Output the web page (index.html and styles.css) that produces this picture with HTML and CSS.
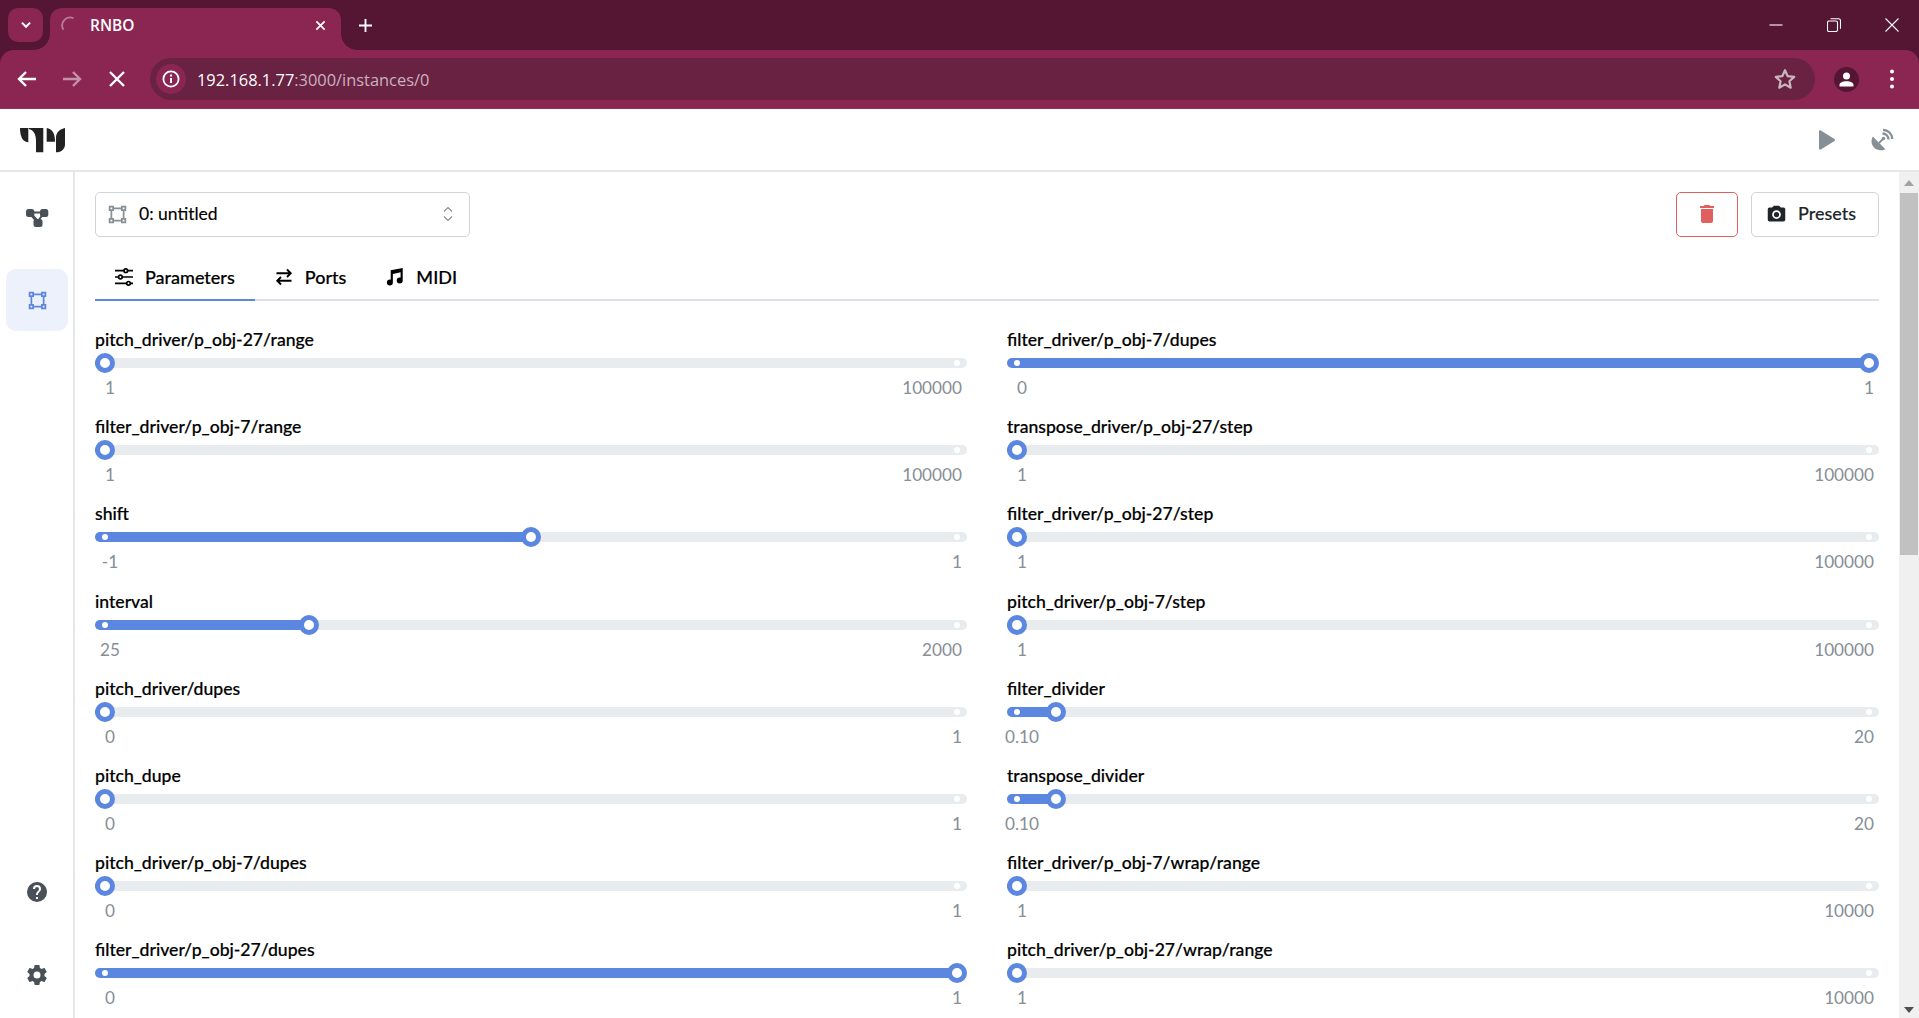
FILE: index.html
```html
<!DOCTYPE html>
<html lang="en">
<head>
<meta charset="utf-8">
<title>RNBO</title>
<link rel="stylesheet" href="styles.css">
</head>
<body>
<div class="chrome">
  <div class="tabstrip">
    <button class="tab-search"><svg viewBox="0 0 24 24" class="ic-14"><path d="M5 8l7 7 7-7" fill="none" stroke="#fff" stroke-width="3.4"/></svg></button>
    <div class="tab">
      <svg viewBox="0 0 20 20" class="spinner"><path d="M3 14A8 8 0 0 1 13 3" fill="none" stroke="#b77d97" stroke-width="1.8" stroke-linecap="round"/></svg>
      <span class="tab-title">RNBO</span>
      <svg viewBox="0 0 12 12" class="tab-close"><path d="M1.5 1.5l9 9M10.5 1.5l-9 9" stroke="#fff" stroke-width="1.9"/></svg>
    </div>
    <svg viewBox="0 0 14 14" class="new-tab"><path d="M7 0v14M0 7h14" stroke="#fff" stroke-width="2"/></svg>
    <div class="win-controls">
      <svg viewBox="0 0 14 14" class="win-ic win-min"><path d="M0.5 7h13" stroke="#fff" stroke-width="1.1"/></svg>
      <svg viewBox="0 0 14 14" class="win-ic win-restore"><rect x="0.5" y="3" width="10" height="10.5" rx="1.5" fill="none" stroke="#fff" stroke-width="1.1"/><path d="M3.5 0.8h8.2a1.8 1.8 0 0 1 1.8 1.8v8.2" fill="none" stroke="#fff" stroke-width="1.1"/></svg>
      <svg viewBox="0 0 14 14" class="win-ic"><path d="M0.5 0.5l13 13M13.5 0.5l-13 13" stroke="#fff" stroke-width="1.1"/></svg>
    </div>
  </div>
  <div class="toolbar">
    <svg viewBox="0 0 24 24" class="nav-ic"><path d="M21 12H4M11 5l-7 7 7 7" fill="none" stroke="#fff" stroke-width="2.4"/></svg>
    <svg viewBox="0 0 24 24" class="nav-ic"><path d="M3 12h17M13 5l7 7-7 7" fill="none" stroke="#c391a8" stroke-width="2.4"/></svg>
    <svg viewBox="0 0 24 24" class="nav-ic"><path d="M5 5l14 14M19 5L5 19" fill="none" stroke="#fff" stroke-width="2.4"/></svg>
    <div class="omnibox">
      <span class="info-chip"><svg viewBox="0 0 20 20" class="info-ic"><circle cx="10" cy="10" r="7.6" fill="none" stroke="#fff" stroke-width="1.8"/><path d="M10 9v5M10 5.5v2" stroke="#fff" stroke-width="2"/></svg></span>
      <span class="url"><span class="url-host">192.168.1.77</span>:3000/instances/0</span>
      <svg viewBox="0 0 24 24" class="star"><path d="M12 3.2l2.7 6 6.5.7-4.8 4.4 1.3 6.4-5.7-3.3-5.7 3.3 1.3-6.4-4.8-4.4 6.5-.7z" fill="none" stroke="#c9b6bf" stroke-width="2.2" stroke-linejoin="round"/></svg>
    </div>
    <span class="avatar"><svg viewBox="0 0 24 24" class="avatar-ic"><path fill="#fff" d="M12 4A4 4 0 0 1 16 8A4 4 0 0 1 12 12A4 4 0 0 1 8 8A4 4 0 0 1 12 4M12 14C16.42 14 20 15.79 20 18V20H4V18C4 15.79 7.58 14 12 14Z"/></svg></span>
    <svg viewBox="0 0 6 22" class="dots"><circle cx="3" cy="3.5" r="2" fill="#fff"/><circle cx="3" cy="11" r="2" fill="#fff"/><circle cx="3" cy="18.5" r="2" fill="#fff"/></svg>
  </div>
</div>

<header class="app-header">
  <svg viewBox="0 0 45 25" class="logo">
    <path fill="#222" d="M0 0H8.300V14.300C3.300 14.300 0 9.300 0 0Z"/>
    <path fill="#222" d="M8.800 0H23.300V24.300H16V12.700C16 6 13.300 2 8.800 1Z"/>
    <path fill="#222" d="M26.700 0C31.700 1 35 4.300 35 13.700H26.700Z"/>
    <path fill="#222" d="M45 0V16C45 21 41.700 24.300 36 24.300V9.300C36 4.300 40 1 45 0Z"/>
  </svg>
  <div class="header-actions">
    <svg viewBox="0 0 24 24" class="head-ic"><path fill="#868e96" d="M5 3.500C5 2.500 6 2 6.800 2.600L20.500 11C21.300 11.500 21.300 12.500 20.500 13L6.800 21.400C6 22 5 21.500 5 20.500Z"/></svg>
    <svg viewBox="0 0 24 24" class="head-ic"><path fill="#868e96" d="M2.800 8.600L15.400 21.200C11.500 23.200 6.800 22.600 4 19.600C1.200 16.800.8 12.200 2.800 8.600Z"/><path d="M9 15l4-4" stroke="#868e96" stroke-width="1.800"/><circle cx="13.500" cy="10.500" r="1.700" fill="#868e96"/><path d="M12.500 5.500A6 6 0 0 1 18.500 11.500M13 1.800A9.500 9.500 0 0 1 22.300 11" fill="none" stroke="#868e96" stroke-width="2.300"/></svg>
  </div>
</header>

<div class="app-body">
  <nav class="sidebar">
    <div class="nav-group">
      <a class="nav-item"><svg viewBox="0 0 24 24" class="side-big"><g fill="#495057"><rect x="1" y="4" width="8.300" height="8" rx="2.500"/><rect x="15" y="4" width="8.300" height="8" rx="2.500"/><rect x="8.500" y="14" width="9" height="8" rx="2.500"/></g><path d="M5 7.500h14M19 8l-6 8" stroke="#495057" stroke-width="2"/><path d="M5 8l7 8" stroke="#495057" stroke-width="3.400"/></svg></a>
      <a class="nav-item active"><svg viewBox="0 0 24 24" class="side-ic"><path fill="#5b87e0" d="M2 2H8V4H16V2H22V8H20V16H22V22H16V20H8V22H2V16H4V8H2V2M16 8V6H8V8H6V16H8V18H16V16H18V8H16M4 4V6H6V4H4M18 4V6H20V4H18M4 18V20H6V18H4M18 18V20H20V18H18Z"/></svg></a>
    </div>
    <div class="nav-group">
      <a class="nav-item"><svg viewBox="0 0 24 24" class="side-big"><path fill="#495057" d="M15.070 11.250L14.170 12.170C13.450 12.890 13 13.500 13 15H11V14.500C11 13.390 11.450 12.390 12.170 11.670L13.410 10.410C13.780 10.050 14 9.550 14 9C14 7.890 13.100 7 12 7A2 2 0 0 0 10 9H8A4 4 0 0 1 12 5A4 4 0 0 1 16 9C16 9.880 15.640 10.670 15.070 11.250M13 19H11V17H13M12 2A10 10 0 0 0 2 12A10 10 0 0 0 12 22A10 10 0 0 0 22 12C22 6.470 17.500 2 12 2Z"/></svg></a>
      <a class="nav-item"><svg viewBox="0 0 24 24" class="side-big"><path fill="#495057" d="M12 15.500A3.500 3.500 0 0 1 8.500 12A3.500 3.500 0 0 1 12 8.500A3.500 3.500 0 0 1 15.500 12A3.500 3.500 0 0 1 12 15.500M19.430 12.970C19.470 12.650 19.500 12.330 19.500 12C19.500 11.670 19.470 11.340 19.430 11L21.540 9.370C21.730 9.220 21.780 8.950 21.660 8.730L19.660 5.270C19.540 5.050 19.270 4.960 19.050 5.050L16.560 6.050C16.040 5.660 15.500 5.320 14.870 5.070L14.500 2.420C14.460 2.180 14.250 2 14 2H10C9.750 2 9.540 2.180 9.500 2.420L9.130 5.070C8.500 5.320 7.960 5.660 7.440 6.050L4.950 5.050C4.730 4.960 4.460 5.050 4.340 5.270L2.340 8.730C2.210 8.950 2.270 9.220 2.460 9.370L4.570 11C4.530 11.340 4.500 11.670 4.500 12C4.500 12.330 4.530 12.650 4.570 12.970L2.460 14.630C2.270 14.780 2.210 15.050 2.340 15.270L4.340 18.730C4.460 18.950 4.730 19.030 4.950 18.950L7.440 17.940C7.960 18.340 8.500 18.680 9.130 18.930L9.500 21.580C9.540 21.820 9.750 22 10 22H14C14.250 22 14.460 21.820 14.500 21.580L14.870 18.930C15.500 18.670 16.040 18.340 16.560 17.940L19.050 18.950C19.270 19.030 19.540 18.950 19.660 18.730L21.660 15.270C21.780 15.050 21.730 14.780 21.540 14.630L19.430 12.970Z"/></svg></a>
    </div>
  </nav>

  <main class="main">
    <div class="topbar">
      <div class="select">
        <svg viewBox="0 0 24 24" class="select-ic"><path fill="#868e96" d="M2 2H8V4H16V2H22V8H20V16H22V22H16V20H8V22H2V16H4V8H2V2M16 8V6H8V8H6V16H8V18H16V16H18V8H16M4 4V6H6V4H4M18 4V6H20V4H18M4 18V20H6V18H4M18 18V20H20V18H18Z"/></svg>
        <span class="select-value">0: untitled</span>
        <svg viewBox="0 0 12 18" class="select-caret"><path d="M2 6.500l4-4 4 4M2 11.500l4 4 4-4" fill="none" stroke="#868e96" stroke-width="1.200"/></svg>
      </div>
      <div class="top-actions">
        <button class="btn btn-danger"><svg viewBox="0 0 24 24" class="trash-ic"><path fill="#e06060" d="M19 4H15.500L14.500 3H9.500L8.500 4H5V6H19V4M6 19A2 2 0 0 0 8 21H16A2 2 0 0 0 18 19V7H6V19Z"/></svg></button>
        <button class="btn btn-default"><svg viewBox="0 0 24 24" class="btn-ic"><path fill="#212529" d="M4 4H7L9 2H15L17 4H20A2 2 0 0 1 22 6V18A2 2 0 0 1 20 20H4A2 2 0 0 1 2 18V6A2 2 0 0 1 4 4M12 7A5 5 0 0 0 7 12A5 5 0 0 0 12 17A5 5 0 0 0 17 12A5 5 0 0 0 12 7M12 9A3 3 0 0 1 15 12A3 3 0 0 1 12 15A3 3 0 0 1 9 12A3 3 0 0 1 12 9Z"/></svg><span class="btn-label">Presets</span></button>
      </div>
    </div>

    <div class="tabs">
      <div class="tab-item selected"><svg viewBox="2 2 20 20" class="tab-ic"><g fill="none" stroke="#000" stroke-width="1.900"><circle cx="14" cy="5" r="2"/><path d="M2 5h10M16 5h6"/><circle cx="8" cy="12" r="2"/><path d="M2 12h4M10 12h12"/><circle cx="17" cy="19" r="2"/><path d="M2 19h13M19 19h3"/></g></svg><span>Parameters</span></div>
      <div class="tab-item"><svg viewBox="0 0 24 24" class="tab-ic"><g fill="none" stroke="#000" stroke-width="2.500"><path d="M2 7h19M16 2l5 5-5 5"/><path d="M22 17H3M8 12l-5 5 5 5"/></g></svg><span>Ports</span></div>
      <div class="tab-item"><svg viewBox="2 2 20 21" class="tab-ic"><path fill="#000" d="M21 2V16.500A3.500 3.500 0 0 1 17.500 20A3.500 3.500 0 0 1 14 16.500A3.500 3.500 0 0 1 17.500 13C17.900 13 18.200 13.100 18.500 13.200V7L9.500 9V19A3.500 3.500 0 0 1 6 22.500A3.500 3.500 0 0 1 2.500 19A3.500 3.500 0 0 1 6 15.500C6.400 15.500 6.700 15.600 7 15.700V4.500Z"/></svg><span>MIDI</span></div>
    </div>

    <div class="params">
      <div class="param"><div class="param-label">pitch_driver/p_obj-27/range</div><div class="slider" style="--v:0"><div class="slider-fill"></div><i class="mark mark-min"></i><i class="mark mark-max"></i><div class="slider-thumb"></div></div><div class="marks"><span class="min">1</span><span>100000</span></div></div>
      <div class="param"><div class="param-label">filter_driver/p_obj-7/dupes</div><div class="slider" style="--v:1"><div class="slider-fill"></div><i class="mark mark-min"></i><i class="mark mark-max"></i><div class="slider-thumb"></div></div><div class="marks"><span class="min">0</span><span>1</span></div></div>
      <div class="param"><div class="param-label">filter_driver/p_obj-7/range</div><div class="slider" style="--v:0"><div class="slider-fill"></div><i class="mark mark-min"></i><i class="mark mark-max"></i><div class="slider-thumb"></div></div><div class="marks"><span class="min">1</span><span>100000</span></div></div>
      <div class="param"><div class="param-label">transpose_driver/p_obj-27/step</div><div class="slider" style="--v:0"><div class="slider-fill"></div><i class="mark mark-min"></i><i class="mark mark-max"></i><div class="slider-thumb"></div></div><div class="marks"><span class="min">1</span><span>100000</span></div></div>
      <div class="param"><div class="param-label">shift</div><div class="slider" style="--v:0.5"><div class="slider-fill"></div><i class="mark mark-min"></i><i class="mark mark-max"></i><div class="slider-thumb"></div></div><div class="marks"><span class="min">-1</span><span>1</span></div></div>
      <div class="param"><div class="param-label">filter_driver/p_obj-27/step</div><div class="slider" style="--v:0"><div class="slider-fill"></div><i class="mark mark-min"></i><i class="mark mark-max"></i><div class="slider-thumb"></div></div><div class="marks"><span class="min">1</span><span>100000</span></div></div>
      <div class="param"><div class="param-label">interval</div><div class="slider" style="--v:0.24"><div class="slider-fill"></div><i class="mark mark-min"></i><i class="mark mark-max"></i><div class="slider-thumb"></div></div><div class="marks"><span class="min">25</span><span>2000</span></div></div>
      <div class="param"><div class="param-label">pitch_driver/p_obj-7/step</div><div class="slider" style="--v:0"><div class="slider-fill"></div><i class="mark mark-min"></i><i class="mark mark-max"></i><div class="slider-thumb"></div></div><div class="marks"><span class="min">1</span><span>100000</span></div></div>
      <div class="param"><div class="param-label">pitch_driver/dupes</div><div class="slider" style="--v:0"><div class="slider-fill"></div><i class="mark mark-min"></i><i class="mark mark-max"></i><div class="slider-thumb"></div></div><div class="marks"><span class="min">0</span><span>1</span></div></div>
      <div class="param"><div class="param-label">filter_divider</div><div class="slider" style="--v:0.0452"><div class="slider-fill"></div><i class="mark mark-min"></i><i class="mark mark-max"></i><div class="slider-thumb"></div></div><div class="marks"><span class="min">0.10</span><span>20</span></div></div>
      <div class="param"><div class="param-label">pitch_dupe</div><div class="slider" style="--v:0"><div class="slider-fill"></div><i class="mark mark-min"></i><i class="mark mark-max"></i><div class="slider-thumb"></div></div><div class="marks"><span class="min">0</span><span>1</span></div></div>
      <div class="param"><div class="param-label">transpose_divider</div><div class="slider" style="--v:0.0452"><div class="slider-fill"></div><i class="mark mark-min"></i><i class="mark mark-max"></i><div class="slider-thumb"></div></div><div class="marks"><span class="min">0.10</span><span>20</span></div></div>
      <div class="param"><div class="param-label">pitch_driver/p_obj-7/dupes</div><div class="slider" style="--v:0"><div class="slider-fill"></div><i class="mark mark-min"></i><i class="mark mark-max"></i><div class="slider-thumb"></div></div><div class="marks"><span class="min">0</span><span>1</span></div></div>
      <div class="param"><div class="param-label">filter_driver/p_obj-7/wrap/range</div><div class="slider" style="--v:0"><div class="slider-fill"></div><i class="mark mark-min"></i><i class="mark mark-max"></i><div class="slider-thumb"></div></div><div class="marks"><span class="min">1</span><span>10000</span></div></div>
      <div class="param"><div class="param-label">filter_driver/p_obj-27/dupes</div><div class="slider" style="--v:1"><div class="slider-fill"></div><i class="mark mark-min"></i><i class="mark mark-max"></i><div class="slider-thumb"></div></div><div class="marks"><span class="min">0</span><span>1</span></div></div>
      <div class="param"><div class="param-label">pitch_driver/p_obj-27/wrap/range</div><div class="slider" style="--v:0"><div class="slider-fill"></div><i class="mark mark-min"></i><i class="mark mark-max"></i><div class="slider-thumb"></div></div><div class="marks"><span class="min">1</span><span>10000</span></div></div>
    </div>
  </main>

  <div class="scrollbar">
    <svg viewBox="0 0 10 6" class="arrow arrow-up"><path d="M0 6L5 0L10 6Z" fill="#a3a3a3"/></svg>
    <div class="scroll-track"><div class="scroll-thumb"></div></div>
    <svg viewBox="0 0 10 6" class="arrow arrow-down"><path d="M0 0L5 6L10 0Z" fill="#505050"/></svg>
  </div>
</div>
</body>
</html>
```
FILE: styles.css
```css
* { box-sizing: border-box; }
html, body { height: 100%; }
body {
  margin: 0;
  display: flex;
  flex-direction: column;
  overflow: hidden;
  background: #fff;
  color: #000;
  font-family: "Lato", "Liberation Sans", sans-serif;
}
svg { display: block; flex: none; }
button { font: inherit; padding: 0; cursor: pointer; }

/* Browser chrome */
.chrome { flex: none; height: 109px; background: #551634; border-bottom: 1px solid #8f3058; }
.tabstrip { height: 50px; display: flex; align-items: flex-start; padding: 8px 0 0 8px; }
.tab-search {
  width: 35px; height: 34px; border: 0; border-radius: 10px;
  background: #8a2651; display: flex; align-items: center; justify-content: center;
}
.ic-14 { width: 14px; height: 14px; }
.tab {
  position: relative;
  width: 291px; height: 42px; margin-left: 7px;
  background: #8a2651; border-radius: 12px 12px 0 0;
  display: flex; align-items: center; padding: 0 15px 8px 10px; gap: 10px;
}
.tab::before, .tab::after {
  content: ""; position: absolute; bottom: 0; width: 16px; height: 16px;
}
.tab::before { left: -16px; background: radial-gradient(circle at 0 0, transparent 15.5px, #8a2651 16px); }
.tab::after { right: -16px; background: radial-gradient(circle at 100% 0, transparent 15.5px, #8a2651 16px); }
.spinner { width: 20px; height: 20px; }
.tab-title { flex: 1; color: #fff; font: 600 15.5px "Open Sans", sans-serif; }
.tab-close { width: 11px; height: 11px; }
.new-tab { width: 13px; height: 13px; margin: 11px 0 0 18px; }
.win-controls { margin-left: auto; margin-top: -8px; height: 50px; display: flex; align-items: center; padding-right: 20px; gap: 42px; }
.win-ic { width: 14px; height: 14px; }
.win-min { margin-right: 4px; }
.win-restore { margin: 0 2px 0 -2px; }

.toolbar {
  height: 58px; background: #8a2651; border-radius: 14px 14px 0 0;
  display: flex; align-items: center; padding: 0 0 0 15px;
}
.nav-ic { width: 24px; height: 24px; margin-right: 21px; }
.omnibox {
  width: 1665px; height: 42px; border-radius: 21px; background: #692242;
  display: flex; align-items: center; padding: 0 18px 0 6px;
}
.info-chip {
  width: 30px; height: 30px; border-radius: 50%; background: #8a2651;
  display: flex; align-items: center; justify-content: center; margin-right: 11px;
}
.info-ic { width: 20px; height: 20px; }
.url { flex: 1; color: #cbb2be; font: 400 16.4px "Open Sans", sans-serif; }
.url-host { color: #fff; }
.star { width: 24px; height: 24px; }
.avatar {
  width: 25px; height: 25px; border-radius: 50%; background: #551634; margin-left: 19px;
  display: flex; align-items: center; justify-content: center;
}
.avatar-ic { width: 21px; height: 21px; }
.dots { width: 6px; height: 22px; margin-left: 30px; }

/* App header */
.app-header {
  flex: none; height: 63px; border-bottom: 2px solid #e4e6e8;
  display: flex; align-items: center; justify-content: space-between; padding: 0 25px 0 20px;
}
.logo { width: 45px; height: 25px; margin-top: 1px; }
.header-actions { display: flex; gap: 32px; }
.head-ic { width: 24px; height: 24px; }

/* Body */
.app-body { flex: 1; min-height: 0; display: flex; }
.sidebar {
  flex: none; width: 75px; border-right: 2px solid #e4e6e8;
  display: flex; flex-direction: column; justify-content: space-between;
  padding: 14px 6px 12px;
}
.nav-group { display: flex; flex-direction: column; gap: 21px; }
.nav-item {
  width: 62px; height: 62px; border-radius: 10px;
  display: flex; align-items: center; justify-content: center;
}
.nav-item.active { background: #ecf1fb; }
.side-ic { width: 21px; height: 21px; }
.side-big { width: 24px; height: 24px; }

.main { flex: 1; min-width: 0; padding: 20px 20px 0 20px; overflow: hidden; }
.topbar { display: flex; justify-content: space-between; }
.select {
  width: 375px; height: 44.5px; border: 1px solid #ced4da; border-radius: 5px;
  display: flex; align-items: center; padding: 0 15px 2px 11px;
}
.select-ic { width: 21px; height: 21px; margin-right: 11px; margin-top: 2px; }
.select-value { flex: 1; font-size: 17.5px; -webkit-text-stroke: 0.15px #000; }
.select-caret { width: 12px; height: 18px; margin-top: 2px; }
.top-actions { display: flex; gap: 13px; }
.btn {
  height: 44.5px; background: #fff; border-radius: 5px;
  display: flex; align-items: center; justify-content: center;
}
.btn-danger { width: 62px; border: 1px solid #e06060; }
.btn-default { width: 128px; border: 1px solid #ced4da; justify-content: flex-start; padding: 0 0 0 14px; gap: 11px; font-size: 18px; font-weight: 500; color: #212529; }
.btn-label { padding-bottom: 2px; -webkit-text-stroke: 0.15px #212529; }
.btn-ic { width: 21px; height: 21px; }
.trash-ic { width: 24px; height: 24px; }

.tabs { display: flex; margin-top: 17.5px; border-bottom: 2px solid #dee2e6; height: 47px; }
.tab-item {
  height: 47px; padding: 0 20px; border-bottom: 2px solid transparent;
  display: flex; align-items: center; gap: 12px; font-size: 18px; font-weight: 500;
  -webkit-text-stroke: 0.2px #000;
}
.tab-item.selected { border-bottom-color: #5b87e0; }
.tab-ic { width: 18px; height: 18px; }

.params {
  display: grid; grid-template-columns: 872px 872px; column-gap: 40px; row-gap: 15.1px;
  margin-top: 27.3px;
}
.param-label { font-size: 17.6px; font-weight: 500; line-height: 24px; padding-bottom: 6px; -webkit-text-stroke: 0.2px #000; }
.slider { position: relative; height: 10px; background: #e9ecef; border-radius: 5px; }
.slider-fill {
  position: absolute; left: 0; top: 0; bottom: 0; border-radius: 5px; background: #5b87e0;
  width: calc(10px + (100% - 20px) * var(--v));
}
.mark { position: absolute; top: 2px; width: 6px; height: 6px; border-radius: 50%; background: #fff; }
.mark-min { left: 7px; }
.mark-max { right: 7px; }
.slider-thumb {
  position: absolute; top: -5px; width: 20px; height: 20px; border-radius: 50%;
  background: #fff; border: 5px solid #5b87e0;
  left: calc((100% - 20px) * var(--v));
}
.marks {
  display: flex; justify-content: space-between; padding: 8px 5px 0 0;
  color: #868e96; font-size: 17.2px; line-height: 24px;
}
.marks .min { width: 30px; display: flex; justify-content: center; white-space: nowrap; }

/* Scrollbar */
.scrollbar { flex: none; width: 20px; background: #f0f0f0; display: flex; flex-direction: column; align-items: center; }
.arrow { width: 10px; height: 6px; }
.arrow-up { margin: 8px 0 7px; }
.arrow-down { margin: 6px 0 5px; }
.scroll-track { flex: 1; min-height: 0; width: 100%; padding: 0 1px; }
.scroll-thumb { height: 362px; background: #c1c1c1; }
```
